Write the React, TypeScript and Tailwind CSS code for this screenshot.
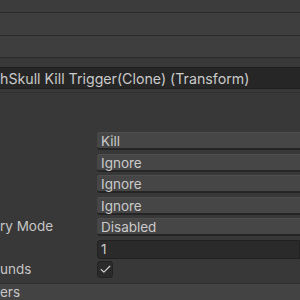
import { Check } from "lucide-react";

// dropdown-like field used in the inspector rows
function Popup({ text }: { text: string }) {
  return (
    <div className="h-[18px] flex-1 rounded-l-[3px] border-b-2 border-[#252525] bg-[#464646] pl-[4px] text-[13.5px] leading-[18px] text-[#cacaca] shadow-[inset_0_1px_0_#4f4f4f]">
      {text}
    </div>
  );
}

function Row({ label, children }: { label?: string; children: React.ReactNode }) {
  return (
    <div className="flex h-[21.5px] items-start">
      <div className="w-[97px] shrink-0 whitespace-nowrap text-[13.5px] leading-[17px] text-[#c6c6c6]">
        {label}
      </div>
      {children}
    </div>
  );
}

export default function App() {
  return (
    <div
      className="h-[300px] w-[300px] overflow-hidden bg-[#383838]"
      style={{ fontFamily: "Inter, 'Noto Sans', sans-serif" }}
    >
      {/* header bands */}
      <div className="h-[13px] border-b border-[#2a2a2a] bg-[#3c3c3c]" />
      <div className="h-[23px] border-b border-[#2a2a2a] bg-[#3e3e3e]" />
      <div className="h-[22px] border-b border-[#2a2a2a] bg-[#3e3e3e]" />
      <div className="h-[9px]" />

      {/* object field */}
      <div className="h-[22px] border-y border-[#1e1e1e] bg-[#262626] pl-0 text-[14.2px] leading-[22px] whitespace-nowrap text-[#cacaca]">
        hSkull Kill Trigger(Clone) (Transform)
      </div>
      <div className="mt-[3px] h-px bg-[#303030]" />

      <div className="h-[39px]" />

      <Row>
        <Popup text="Kill" />
      </Row>
      <Row>
        <Popup text="Ignore" />
      </Row>
      <Row>
        <Popup text="Ignore" />
      </Row>
      <Row>
        <Popup text="Ignore" />
      </Row>
      <Row label="ry Mode">
        <Popup text="Disabled" />
      </Row>
      <Row>
        <div className="h-[19px] flex-1 rounded-l-[3px] border border-[#212121] bg-[#2a2a2a] pl-[3px] text-[13.5px] leading-[16px] text-[#cacaca]">
          1
        </div>
      </Row>
      <Row label="unds">
        <div className="flex h-[17px] w-[16px] items-center justify-center rounded-[3px] border border-[#222] bg-[#2a2a2a]">
          <Check size={13} strokeWidth={2} className="text-[#d4d4d4]" />
        </div>
      </Row>

      {/* next section header */}
      <div className="h-[20px] border-t border-[#2e2e2e] bg-[#434343] text-[13.5px] leading-[17px] text-[#c6c6c6]">
        ers
      </div>
    </div>
  );
}
